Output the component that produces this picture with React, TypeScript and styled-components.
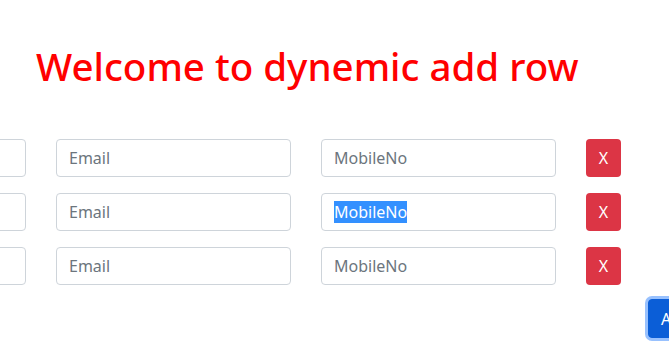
import styled, { createGlobalStyle } from "styled-components";

const GlobalStyle = createGlobalStyle`
  html, body {
    margin: 0;
    background: #fff;
    overflow: hidden;
  }
  body {
    font-family: "Noto Sans", "Open Sans", sans-serif;
  }
`;

const Page = styled.div`
  width: 669px;
  height: 351px;
  padding-top: 38px;
  box-sizing: border-box;
`;

const Title = styled.h1`
  margin: 0 0 45px 36px;
  color: #ff0000;
  font-size: 38.5px;
  font-weight: 500;
  line-height: 56px;
  white-space: nowrap;
`;

const Rows = styled.div`
  display: flex;
  flex-direction: column;
  gap: 16px;
  margin-left: -209px;
`;

const Row = styled.div`
  display: flex;
  gap: 30px;
`;

const Field = styled.input`
  width: 235px;
  height: 38px;
  box-sizing: border-box;
  padding: 6px 12px;
  border: 1px solid #ced4da;
  border-radius: 4px;
  font-family: inherit;
  font-size: 16px;
  color: #212529;
  background: #fff;
  outline: none;
  &::placeholder {
    color: #6c757d;
  }
`;

const FakeField = styled.div`
  width: 235px;
  height: 38px;
  box-sizing: border-box;
  padding: 0 12px;
  border: 1px solid #ced4da;
  border-radius: 4px;
  font-size: 16px;
  display: flex;
  align-items: center;
`;

const Selected = styled.span`
  background: #3390ff;
  color: #fff;
  line-height: 22px;
`;

const RemoveButton = styled.button`
  width: 35px;
  height: 38px;
  border: none;
  border-radius: 4px;
  background: #dc3545;
  color: #fff;
  font-family: inherit;
  font-size: 16px;
  cursor: pointer;
`;

const FooterRow = styled.div`
  display: flex;
  margin-top: 14px;
`;

const AddButton = styled.button`
  margin-left: 648px;
  height: 39px;
  padding: 6px 12px;
  border: 1px solid #0b5ed7;
  border-radius: 4px;
  background: #0b5ed7;
  color: #fff;
  font-family: inherit;
  font-size: 16px;
  box-shadow: 0 0 0 3px rgba(49, 132, 253, 0.5);
  white-space: nowrap;
`;

export default function App() {
  const rows = [0, 1, 2];
  return (
    <Page>
      <GlobalStyle />
      <Title>Welcome to dynemic add row</Title>
      <Rows>
        {rows.map((r) => (
          <Row key={r}>
            <Field placeholder="Name" />
            <Field placeholder="Email" />
            {r === 1 ? (
              <FakeField>
                <Selected>MobileNo</Selected>
              </FakeField>
            ) : (
              <Field placeholder="MobileNo" />
            )}
            <RemoveButton>X</RemoveButton>
          </Row>
        ))}
      </Rows>
      <FooterRow>
        <AddButton>Add</AddButton>
      </FooterRow>
    </Page>
  );
}
